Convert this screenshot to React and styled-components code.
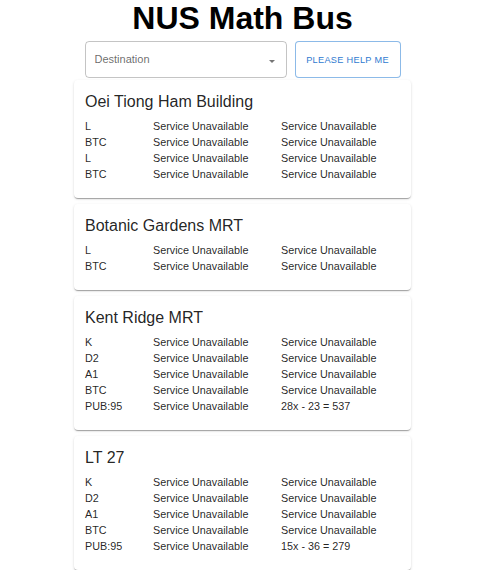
import styled, { createGlobalStyle } from 'styled-components';

const stops = [
  {
    name: 'Oei Tiong Ham Building',
    rows: [
      ['L', 'Service Unavailable', 'Service Unavailable'],
      ['BTC', 'Service Unavailable', 'Service Unavailable'],
      ['L', 'Service Unavailable', 'Service Unavailable'],
      ['BTC', 'Service Unavailable', 'Service Unavailable'],
    ],
  },
  {
    name: 'Botanic Gardens MRT',
    rows: [
      ['L', 'Service Unavailable', 'Service Unavailable'],
      ['BTC', 'Service Unavailable', 'Service Unavailable'],
    ],
  },
  {
    name: 'Kent Ridge MRT',
    rows: [
      ['K', 'Service Unavailable', 'Service Unavailable'],
      ['D2', 'Service Unavailable', 'Service Unavailable'],
      ['A1', 'Service Unavailable', 'Service Unavailable'],
      ['BTC', 'Service Unavailable', 'Service Unavailable'],
      ['PUB:95', 'Service Unavailable', '28x - 23 = 537'],
    ],
  },
  {
    name: 'LT 27',
    rows: [
      ['K', 'Service Unavailable', 'Service Unavailable'],
      ['D2', 'Service Unavailable', 'Service Unavailable'],
      ['A1', 'Service Unavailable', 'Service Unavailable'],
      ['BTC', 'Service Unavailable', 'Service Unavailable'],
      ['PUB:95', 'Service Unavailable', '15x - 36 = 279'],
    ],
  },
];

const App = () => {
  return (
    <>
      <GlobalStyle />
      <Page>
        <Heading>NUS Math Bus</Heading>
        <Toolbar>
          <Select>
            <Placeholder>Destination</Placeholder>
            <Arrow />
          </Select>
          <HelpButton>Please help me</HelpButton>
        </Toolbar>
        <CardList>
          {stops.map(({ name, rows }) => (
            <Card key={name}>
              <StopName>{name}</StopName>
              <Timings>
                {rows.map(([bus, first, second], i) => (
                  <Row key={i}>
                    <span>{bus}</span>
                    <span>{first}</span>
                    <span>{second}</span>
                  </Row>
                ))}
              </Timings>
            </Card>
          ))}
        </CardList>
      </Page>
    </>
  );
};

export default App;

const GlobalStyle = createGlobalStyle`
  body {
    margin: 0;
    background: #fff;
    font-family: "Liberation Sans", Helvetica, Arial, sans-serif;
    color: rgba(0, 0, 0, 0.87);
  }
`;

const Page = styled.div`
  width: 485px;
  display: flex;
  flex-direction: column;
  align-items: center;
`;

const Heading = styled.h1`
  margin: 0;
  font-size: 32px;
  line-height: 36px;
  font-weight: bold;
  color: #000;
`;

const Toolbar = styled.div`
  display: flex;
  gap: 8px;
  width: 316px;
  height: 37px;
  margin-top: 5px;
`;

const Select = styled.div`
  box-sizing: border-box;
  width: 202px;
  display: flex;
  align-items: center;
  justify-content: space-between;
  padding: 0 11px 0 9px;
  border: 1px solid rgba(0, 0, 0, 0.23);
  border-radius: 4px;
`;

const Placeholder = styled.span`
  font-size: 11px;
  color: rgba(0, 0, 0, 0.6);
  margin-top: -2px;
`;

const Arrow = styled.span`
  width: 0;
  height: 0;
  margin-top: 3px;
  border-left: 3px solid transparent;
  border-right: 3px solid transparent;
  border-top: 3px solid rgba(0, 0, 0, 0.54);
`;

const HelpButton = styled.button`
  box-sizing: border-box;
  width: 106px;
  padding: 0;
  background: #fff;
  border: 1px solid rgba(25, 118, 210, 0.5);
  border-radius: 4px;
  color: #2f7bd0;
  font-family: inherit;
  font-size: 9.2px;
  font-weight: 500;
  letter-spacing: 0.3px;
  text-transform: uppercase;
`;

const CardList = styled.div`
  display: flex;
  flex-direction: column;
  gap: 6px;
  margin-top: 2px;
`;

const Card = styled.div`
  box-sizing: border-box;
  width: 337px;
  padding: 12px 11px 16px;
  border-radius: 4px;
  background: #fff;
  box-shadow: 0px 2px 1px -1px rgba(0, 0, 0, 0.2),
    0px 1px 1px 0px rgba(0, 0, 0, 0.14), 0px 1px 3px 0px rgba(0, 0, 0, 0.12);
`;

const StopName = styled.div`
  font-size: 16px;
  line-height: 19px;
`;

const Timings = styled.div`
  margin-top: 7px;
`;

const Row = styled.div`
  display: grid;
  grid-template-columns: 68px 128px 1fr;
  font-size: 10.8px;
  line-height: 16px;
`;
